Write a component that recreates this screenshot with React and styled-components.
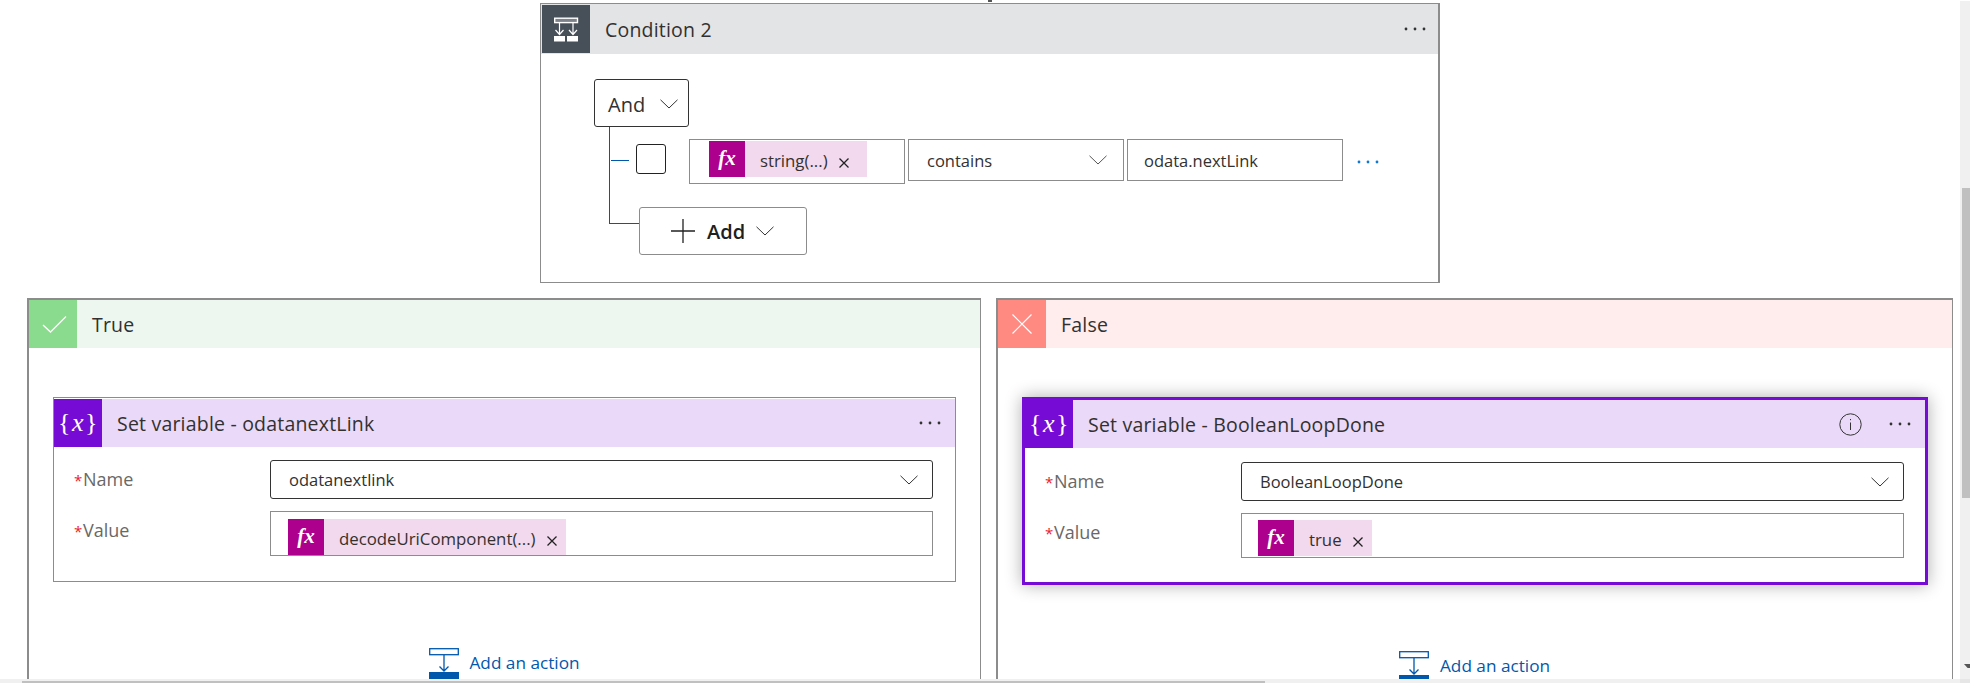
import React from "react"
import styled, { createGlobalStyle } from "styled-components"

const GlobalStyle = createGlobalStyle`
  html, body {
    margin: 0;
    padding: 0;
    background: #fff;
    overflow: hidden;
  }
  * {
    box-sizing: border-box;
  }
`

const BLUE = "#0058ad"
const GRAY = "#8c8c8c"
const VIOLET = "#770bd6"

const Page = styled.div`
  display: grid;
  grid-template-columns: 1fr 10px;
  grid-template-rows: 679px 4px;
  width: 1970px;
  height: 683px;
  overflow: hidden;
  position: relative;
  font-family: "Open Sans", "Noto Sans", sans-serif;
  color: #323130;
`

const Canvas = styled.div`
  overflow: hidden;
  padding-top: 3px;
`

const VTrack = styled.div`
  margin-top: 1px;
  background: #f0f0f0;
  display: flex;
  flex-direction: column;
  align-items: flex-end;
`

const VThumb = styled.div`
  width: 8px;
  height: 310px;
  margin-top: 187px;
  background: #c0c0c0;
`

const ScrollArrow = styled.div`
  margin-top: 166px;
  margin-right: 0;
  width: 6px;
  height: 4px;
  background: #555;
  clip-path: polygon(0 0, 100% 0, 100% 100%, 60% 100%);
`

const HTrack = styled.div`
  background: #f0f0f0;
  padding-top: 2px;
  padding-left: 22px;
`

const HThumb = styled.div`
  width: 1243px;
  height: 2px;
  background: #c0c0c0;
`

const Corner = styled.div`
  background: #e6e6e6;
`

const TopTick = styled.div`
  position: absolute;
  top: 0;
  left: 988px;
  width: 4px;
  height: 2px;
  background: #555;
`

const ConditionCard = styled.section`
  width: 900px;
  height: 280px;
  margin-left: 540px;
  border: 1px solid ${GRAY};
  border-width: 1px 2px 1px 1px;
`

const Header = styled.header`
  display: flex;
  align-items: center;
  height: ${p => p.$h || 48}px;
  background: ${p => p.$bg};
`

const IconBox = styled.div`
  flex: none;
  width: 48px;
  height: 48px;
  margin-left: ${p => p.$ml || 0}px;
  display: flex;
  align-items: center;
  justify-content: center;
  background: ${p => p.$bg};
  color: #fff;
`

const Title = styled.h2`
  flex: 1;
  margin: 0 0 0 15px;
  padding-top: 1px;
  font-size: 19.5px;
  font-weight: 400;
  line-height: 24px;
  letter-spacing: 0.2px;
  white-space: nowrap;
`

const HeaderTools = styled.div`
  display: flex;
  align-items: center;
  gap: 27px;
  margin-right: ${p => p.$mr || 12}px;
`

const ConditionBody = styled.div`
  padding: 25px 0 0 53px;
`

const AndButton = styled.div`
  display: flex;
  align-items: center;
  gap: 15px;
  width: 95px;
  height: 48px;
  padding: 2px 0 0 13px;
  border: 1px solid #333;
  border-radius: 3px;
  font-size: 20px;
`

const Tree = styled.div`
  position: relative;
  margin-left: 15px;
  padding-top: 12px;

  &::before {
    content: "";
    position: absolute;
    top: 0;
    left: 0;
    width: 31px;
    height: 96px;
    border-left: 1px solid ${BLUE};
    border-bottom: 1px solid ${BLUE};
  }
`

const RuleRow = styled.div`
  display: flex;
  align-items: flex-start;
`

const Stub = styled.div`
  width: 18px;
  height: 1px;
  margin: 21px 0 0 2px;
  background: ${BLUE};
`

const Check = styled.div`
  width: 30px;
  height: 30px;
  margin: 5px 23px 0 7px;
  border: 1px solid #222;
  border-radius: 3px;
`

const FieldBox = styled.div`
  display: flex;
  flex: none;
  align-items: ${p => (p.$token ? "flex-start" : "center")};
  justify-content: space-between;
  width: ${p => p.$w || 216}px;
  height: ${p => p.$h || 42}px;
  margin-right: ${p => p.$mr || 0}px;
  padding: ${p => p.$pad || "0 16px"};
  border: 1px solid ${p => (p.$dark ? "#333" : GRAY)};
  border-radius: ${p => (p.$dark ? "3px" : "0")};
  font-size: 16.5px;
`

const Token = styled.div`
  display: flex;
  align-items: center;
  flex: none;
  height: 36px;
  padding-right: ${p => p.$pr || 9}px;
  background: #f2d9ed;
  font-size: 16.8px;
`

const FxBox = styled.span`
  width: 36px;
  height: 36px;
  margin-right: 15px;
  background: #ad008c;
  color: #fff;
  font-family: "Liberation Serif", serif;
  font-style: italic;
  font-weight: 700;
  font-size: 21px;
  line-height: 34px;
  text-align: center;
`

const TokenText = styled.span`
  padding-top: 2px;
`

const TokenClose = styled.span`
  display: flex;
  margin: 8px 0 0 11px;
`

const RuleDots = styled.div`
  margin: 21px 0 0 14px;
  display: flex;
`

const AddButton = styled.div`
  display: flex;
  align-items: center;
  width: 168px;
  height: 48px;
  margin: 23px 0 0 30px;
  padding-left: 31px;
  border: 1px solid ${GRAY};
  border-radius: 3px;
  background: #fff;
  position: relative;
  font-size: 20px;
  font-weight: 600;
  color: #201f1e;
`

const AddLabel = styled.span`
  margin: 0 11px 0 12px;
`

const Branches = styled.div`
  display: flex;
  gap: 15px;
  margin-top: 15px;
  padding-left: 27px;
`

const BranchCard = styled.section`
  flex: none;
  width: ${p => p.$w}px;
  height: 420px;
  border: 1px solid ${GRAY};
  border-width: 2px 1px 0 2px;
`

const StepCard = styled.article`
  width: ${p => (p.$selected ? 906 : 903)}px;
  height: ${p => (p.$selected ? 188 : 185)}px;
  margin: 49px 0 0 24px;
  padding-top: ${p => (p.$selected ? 0 : 1)}px;
  border: ${p => (p.$selected ? `3px solid ${VIOLET}` : `1px solid ${GRAY}`)};
  box-shadow: ${p => (p.$selected ? "0 0 16px rgba(0, 0, 0, 0.32)" : "none")};
`

const Braces = styled.span`
  font-family: "Liberation Serif", serif;
  font-size: 26px;
  line-height: 44px;
  letter-spacing: 0.5px;
  em {
    margin: 0 1px;
  }
`

const Form = styled.div`
  display: flex;
  flex-direction: column;
  gap: 12px;
  margin-top: ${p => (p.$selected ? 14 : 13)}px;
`

const FormRow = styled.div`
  display: flex;
  align-items: flex-start;
`

const FieldLabel = styled.label`
  flex: none;
  width: 216px;
  padding: 7px 0 0 20px;
  font-size: 18px;
  line-height: 24px;
  color: #6a6866;
`

const Req = styled.span`
  display: inline-block;
  width: 9px;
  font-size: 15px;
  color: #e8202e;
`

const AddAction = styled.div`
  display: flex;
  align-items: flex-start;
  gap: 11px;
  width: 152px;
  margin: 66px auto 0;
  color: ${BLUE};
  font-size: 17.2px;
  line-height: 30px;
  white-space: nowrap;
`

const Chevron = ({ w = 18, color = "#333" }) => (
  <svg width={w} height="10" viewBox="0 0 18 10" fill="none" stroke={color} strokeWidth="1">
    <path d="M0.5 0.8 L9 9 L17.5 0.8" />
  </svg>
)

const Dots = ({ color = "#333" }) => (
  <svg width="22" height="4" viewBox="0 0 22 4" fill={color}>
    <circle cx="2" cy="2" r="1.4" />
    <circle cx="11" cy="2" r="1.4" />
    <circle cx="20" cy="2" r="1.4" />
  </svg>
)

const CloseX = () => (
  <svg width="10" height="10" viewBox="0 0 10 10" stroke="#222" strokeWidth="1.3">
    <path d="M0.5 0.5 L9.5 9.5 M9.5 0.5 L0.5 9.5" />
  </svg>
)

const ConditionIcon = () => (
  <svg width="48" height="48" viewBox="0 0 48 48" fill="none" stroke="#fff" strokeWidth="1.2">
    <rect x="12.7" y="13.2" width="22.8" height="4.4" stroke="#fff" strokeWidth="1.4" fill="#7d828a" />
    <path d="M17.5 17.5 V29 M31 17.5 V29 M13.5 25 L17.5 29.5 L21.5 25 M27 25 L31 29.5 L35 25" />
    <rect x="12" y="31" width="11" height="5.5" fill="#fff" stroke="none" />
    <rect x="25" y="31" width="11" height="5.5" fill="#fff" stroke="none" />
  </svg>
)

const CheckIcon = () => (
  <svg width="48" height="48" viewBox="0 0 48 48" fill="none" stroke="#fff" strokeWidth="1.3">
    <path d="M14 25 L21.5 32 L37 16.5" />
  </svg>
)

const CrossIcon = () => (
  <svg width="48" height="48" viewBox="0 0 48 48" fill="none" stroke="#fff" strokeWidth="1.2">
    <path d="M14.5 14.5 L33.5 33.5 M33.5 14.5 L14.5 33.5" />
  </svg>
)

const PlusIcon = () => (
  <svg width="24" height="24" viewBox="0 0 24 24" stroke="#222" strokeWidth="1.3">
    <path d="M0 12 H24 M12 0 V24" />
  </svg>
)

const InfoIcon = () => (
  <svg width="23" height="23" viewBox="0 0 23 23" fill="none" stroke="#333" strokeWidth="1">
    <circle cx="11.5" cy="11.5" r="10.7" />
    <path d="M11.5 9.5 V17 M11.5 6 V7.2" />
  </svg>
)

const AddActionIcon = () => (
  <svg width="30" height="31" viewBox="0 0 30 31" fill="none" stroke={BLUE} strokeWidth="1.3">
    <rect x="0.7" y="0.7" width="28.6" height="6" />
    <path d="M15 7 V23 M10.5 18.5 L15 23 L19.5 18.5" />
    <rect x="0" y="24" width="30" height="7" fill={BLUE} stroke="none" />
  </svg>
)

const FnToken = ({ children, pr }) => (
  <Token $pr={pr}>
    <FxBox>fx</FxBox>
    <TokenText>{children}</TokenText>
    <TokenClose><CloseX /></TokenClose>
  </Token>
)

const Step = ({ title, name, value, selected, tokenPad }) => (
  <StepCard $selected={selected}>
    <Header $bg="#ead9f8">
      <IconBox $bg={VIOLET}>
        <Braces>{"{"}<em>x</em>{"}"}</Braces>
      </IconBox>
      <Title>{title}</Title>
      <HeaderTools $mr={14}>
        {selected && <InfoIcon />}
        <Dots />
      </HeaderTools>
    </Header>
    <Form $selected={selected}>
      <FormRow>
        <FieldLabel><Req>*</Req>Name</FieldLabel>
        <FieldBox $dark $w={663} $h={39} $pad="0 14px 0 18px">
          {name}
          <Chevron />
        </FieldBox>
      </FormRow>
      <FormRow>
        <FieldLabel><Req>*</Req>Value</FieldLabel>
        <FieldBox $token $w={663} $h={45} $pad={tokenPad}>
          <FnToken>{value}</FnToken>
        </FieldBox>
      </FormRow>
    </Form>
  </StepCard>
)

export default function App() {
  return (
    <Page>
      <GlobalStyle />
      <Canvas>
        <ConditionCard>
          <Header $h={50} $bg="#e3e4e6">
            <IconBox $bg="#474f59" $ml={1}>
              <ConditionIcon />
            </IconBox>
            <Title>Condition 2</Title>
            <HeaderTools>
              <Dots />
            </HeaderTools>
          </Header>
          <ConditionBody>
            <AndButton>
              And
              <Chevron />
            </AndButton>
            <Tree>
              <RuleRow>
                <Stub />
                <Check />
                <FieldBox $token $h={45} $mr={3} $pad="1px 0 0 19px">
                  <FnToken pr={18}>string(...)</FnToken>
                </FieldBox>
                <FieldBox $mr={3} $pad="0 16px 0 18px">
                  contains
                  <Chevron color="#555" />
                </FieldBox>
                <FieldBox>odata.nextLink</FieldBox>
                <RuleDots><Dots color="#0f78d4" /></RuleDots>
              </RuleRow>
              <AddButton>
                <PlusIcon />
                <AddLabel>Add</AddLabel>
                <Chevron />
              </AddButton>
            </Tree>
          </ConditionBody>
        </ConditionCard>
        <Branches>
          <BranchCard $w={954}>
            <Header $bg="#edf7f0">
              <IconBox $bg="#8bdb8e"><CheckIcon /></IconBox>
              <Title>True</Title>
            </Header>
            <Step
              title="Set variable - odatanextLink"
              name="odatanextlink"
              value="decodeUriComponent(...)"
              tokenPad="7px 0 0 17px"
            />
            <AddAction>
              <AddActionIcon />
              Add an action
            </AddAction>
          </BranchCard>
          <BranchCard $w={957}>
            <Header $bg="#ffecec">
              <IconBox $bg="#ff8a82"><CrossIcon /></IconBox>
              <Title>False</Title>
            </Header>
            <Step
              selected
              title="Set variable - BooleanLoopDone"
              name="BooleanLoopDone"
              value="true"
              tokenPad="6px 0 0 16px"
            />
            <AddAction>
              <AddActionIcon />
              Add an action
            </AddAction>
          </BranchCard>
        </Branches>
      </Canvas>
      <VTrack>
        <VThumb />
        <ScrollArrow />
      </VTrack>
      <HTrack><HThumb /></HTrack>
      <Corner />
      <TopTick />
    </Page>
  )
}
